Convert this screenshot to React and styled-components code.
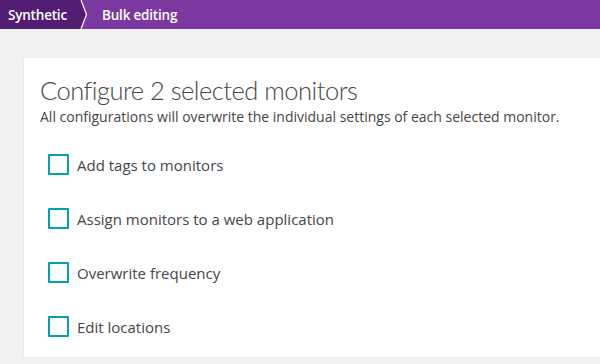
import React from "react";
import styled, { createGlobalStyle } from "styled-components";

const GlobalStyle = createGlobalStyle`
  html, body {
    margin: 0;
    padding: 0;
    background: #f2f2f2;
    font-family: "Open Sans", Lato, sans-serif;
  }
`;

const Page = styled.div`
  width: 600px;
  height: 364px;
  overflow: hidden;
  background: #f2f2f2;
`;

const Bar = styled.nav`
  display: flex;
  align-items: stretch;
  height: 29px;
  background: #7c38a1;
`;

const Crumb = styled.div`
  display: flex;
  align-items: center;
  width: ${(p) => (p.$first ? "72px" : "auto")};
  padding-left: ${(p) => (p.$first ? "8px" : "14px")};
  background: ${(p) => (p.$first ? "#521d72" : "transparent")};
  color: #ffffff;
  font-size: 13.5px;
  font-weight: 600;
  letter-spacing: -0.2px;
`;

const Chevron = styled.svg`
  display: block;
  flex: none;
`;

const Card = styled.section`
  margin: 28px 0 0 23px;
  background: #ffffff;
  border: 1px solid #ebebeb;
  border-right: none;
  height: 301px;
  padding: 15px 0 0 16px;
  box-sizing: border-box;
  color: #454646;
`;

const Title = styled.h1`
  margin: 0;
  font-family: Lato, "Open Sans", sans-serif;
  font-size: 25.5px;
  font-weight: 300;
  letter-spacing: -0.5px;
  line-height: 34px;
  color: #454646;
`;

const Subtitle = styled.p`
  margin: 1px 0 0;
  font-size: 14px;
  line-height: 18px;
`;

const Options = styled.ul`
  list-style: none;
  margin: 28px 0 0 8px;
  padding: 0;
  display: flex;
  flex-direction: column;
  gap: 33px;
`;

const Option = styled.li`
  display: flex;
  align-items: center;
  gap: 8px;
  height: 21px;
  font-size: 15px;
  line-height: 21px;
`;

const Label = styled.span`
  margin-top: 2px;
`;

const Box = styled.span`
  width: 21px;
  height: 21px;
  box-sizing: border-box;
  border: 2px solid #00a1b2;
  border-radius: 1px;
  flex: none;
`;

const options = [
  "Add tags to monitors",
  "Assign monitors to a web application",
  "Overwrite frequency",
  "Edit locations",
];

export default function App() {
  return (
    <Page>
      <GlobalStyle />
      <Bar>
        <Crumb $first>Synthetic</Crumb>
        <Chevron width="8" height="29" viewBox="0 0 8 29">
          <polygon points="0,0 1,0 6.5,14.5 1,29 0,29" fill="#521d72" />
          <polyline points="1,0 6.5,14.5 1,29" fill="none" stroke="#ffffff" strokeWidth="1.2" />
        </Chevron>
        <Crumb>Bulk editing</Crumb>
      </Bar>
      <Card>
        <Title>Configure 2 selected monitors</Title>
        <Subtitle>All configurations will overwrite the individual settings of each selected monitor.</Subtitle>
        <Options>
          {options.map((o) => (
            <Option key={o}>
              <Box />
              <Label>{o}</Label>
            </Option>
          ))}
        </Options>
      </Card>
    </Page>
  );
}
